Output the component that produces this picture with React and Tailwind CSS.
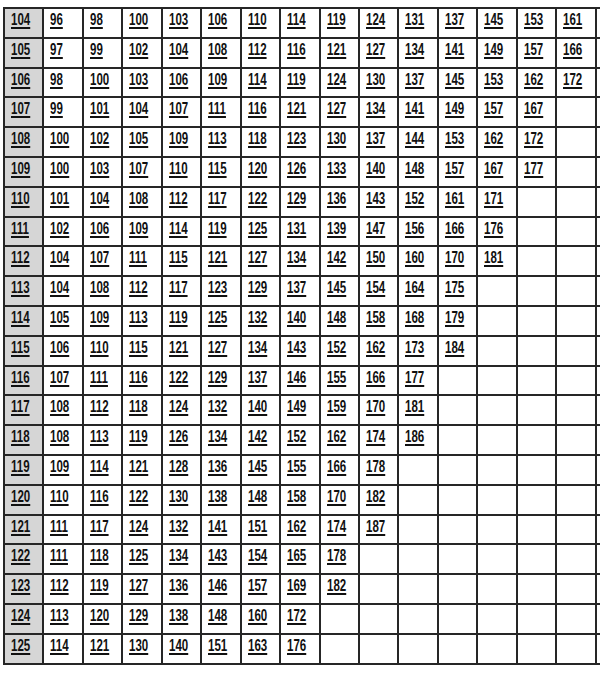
const rows = [
  [104, [96, 98, 100, 103, 106, 110, 114, 119, 124, 131, 137, 145, 153, 161]],
  [105, [97, 99, 102, 104, 108, 112, 116, 121, 127, 134, 141, 149, 157, 166]],
  [106, [98, 100, 103, 106, 109, 114, 119, 124, 130, 137, 145, 153, 162, 172]],
  [107, [99, 101, 104, 107, 111, 116, 121, 127, 134, 141, 149, 157, 167]],
  [108, [100, 102, 105, 109, 113, 118, 123, 130, 137, 144, 153, 162, 172]],
  [109, [100, 103, 107, 110, 115, 120, 126, 133, 140, 148, 157, 167, 177]],
  [110, [101, 104, 108, 112, 117, 122, 129, 136, 143, 152, 161, 171]],
  [111, [102, 106, 109, 114, 119, 125, 131, 139, 147, 156, 166, 176]],
  [112, [104, 107, 111, 115, 121, 127, 134, 142, 150, 160, 170, 181]],
  [113, [104, 108, 112, 117, 123, 129, 137, 145, 154, 164, 175]],
  [114, [105, 109, 113, 119, 125, 132, 140, 148, 158, 168, 179]],
  [115, [106, 110, 115, 121, 127, 134, 143, 152, 162, 173, 184]],
  [116, [107, 111, 116, 122, 129, 137, 146, 155, 166, 177]],
  [117, [108, 112, 118, 124, 132, 140, 149, 159, 170, 181]],
  [118, [108, 113, 119, 126, 134, 142, 152, 162, 174, 186]],
  [119, [109, 114, 121, 128, 136, 145, 155, 166, 178]],
  [120, [110, 116, 122, 130, 138, 148, 158, 170, 182]],
  [121, [111, 117, 124, 132, 141, 151, 162, 174, 187]],
  [122, [111, 118, 125, 134, 143, 154, 165, 178]],
  [123, [112, 119, 127, 136, 146, 157, 169, 182]],
  [124, [113, 120, 129, 138, 148, 160, 172]],
  [125, [114, 121, 130, 140, 151, 163, 176]],
];

const COLS = 16;

// no narrow font installed, so squeeze Liberation Sans bold
function Num({ value }) {
  return (
    <span className="inline-block origin-left scale-x-[0.72] underline decoration-2 underline-offset-[2px]">
      {value}
    </span>
  );
}

export default function App() {
  return (
    <div
      className="w-[600px] h-[678px] overflow-hidden bg-white pt-[7px] pl-[3px] text-[16px] font-bold leading-none text-[#111]"
      style={{ fontFamily: "'Liberation Sans', Arial, sans-serif" }}
    >
      <table className="table-fixed border-collapse w-[631px]">
        <colgroup>
          {Array.from({ length: COLS }).map((_, i) => (
            <col key={i} className="w-[39.45px]" />
          ))}
        </colgroup>
        <tbody>
          {rows.map(([head, values]) => (
            <tr key={head} className="h-[29.8px]">
              <td className="border-2 border-[#262626] bg-[#d6d6d6] align-top pt-[3px] pl-[6px]">
                <Num value={head} />
              </td>
              {Array.from({ length: COLS - 1 }).map((_, i) => (
                <td
                  key={i}
                  className="border-2 border-[#262626] bg-white align-top pt-[3px] pl-[6px]"
                >
                  {values[i] !== undefined && <Num value={values[i]} />}
                </td>
              ))}
            </tr>
          ))}
        </tbody>
      </table>
    </div>
  );
}
